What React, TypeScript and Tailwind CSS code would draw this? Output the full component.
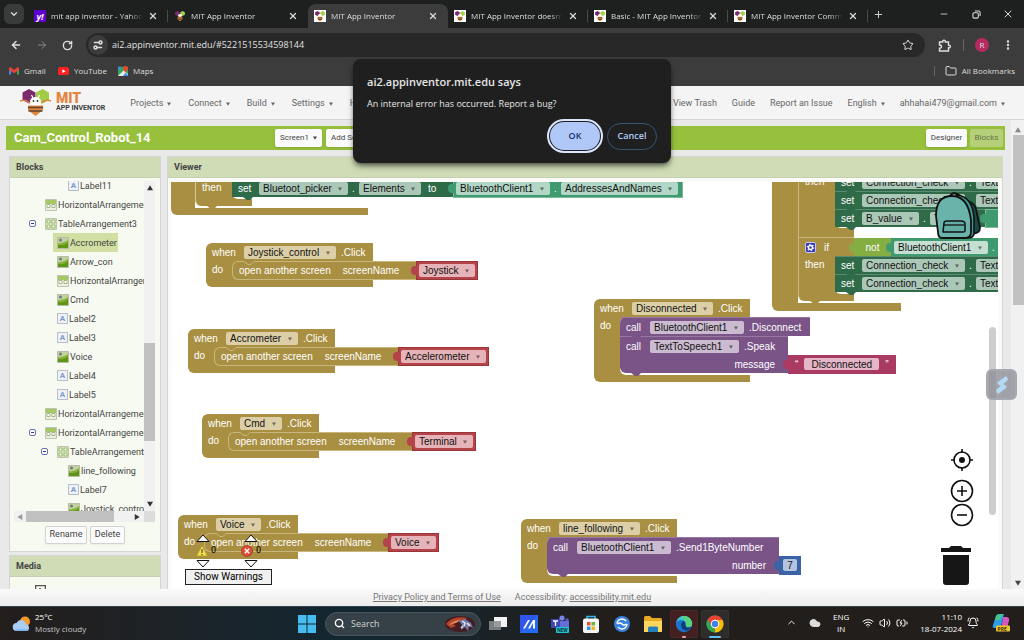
import type { ReactNode } from "react";
import clsx from "clsx";
import {
  ArrowLeft,
  ArrowRight,
  BatteryCharging,
  BellRing,
  ChevronDown,
  ChevronUp,
  Cloud,
  EllipsisVertical,
  Folder,
  Minus,
  Plus,
  RotateCw,
  Search,
  Settings2,
  Star,
  Volume2,
  Wifi,
  X,
} from "lucide-react";

/* ---------- browser chrome ---------- */

function BeeFavicon({ boxed }: { boxed?: boolean }) {
  return (
    <svg viewBox="0 0 12 12" className={clsx("size-3 shrink-0", boxed && "bg-white")}>
      <path d="M3.4 1l2.3 1.2v2.6L3.4 6 1.1 4.800V2.200z" fill="#7b2a6e" />
      <path d="M8.600 1l2.300 1.200v2.600L8.600 6 6.300 4.800V2.200z" fill="#a5cf47" />
      <ellipse cx="6" cy="5.600" rx="2" ry="1.500" fill="#fff" />
      <path d="M3.600 6.800h4.800v2.400L6 11.200 3.600 9.200z" fill="#e08a3c" />
      <path d="M3.600 8h4.800M4 9.600h4" stroke="#5a3a28" strokeWidth=".8" />
    </svg>
  );
}

function YahooIcon() {
  return (
    <span className="flex size-3 shrink-0 items-center justify-center bg-[#5f01d1] text-[9px] leading-none font-bold text-white italic">
      y!
    </span>
  );
}

const tabs = [
  { title: "mit app inventor - Yahoo", icon: "yahoo" },
  { title: "MIT App Inventor", icon: "bee" },
  { title: "MIT App Inventor", icon: "boxed", active: true },
  { title: "MIT App Inventor doesn't", icon: "boxed" },
  { title: "Basic - MIT App Inventor", icon: "boxed" },
  { title: "MIT App Inventor Comm", icon: "boxed" },
];

function TabStrip() {
  return (
    <div className="flex h-7 items-end bg-[#1e2020] pl-1 text-[#dcdcdc]">
      <button aria-label="Search tabs" className="mb-1 flex size-5 items-center justify-center rounded-md bg-[#3a3b3b]">
        <ChevronDown className="size-2.5" strokeWidth={3} />
      </button>
      <div className="ml-1 flex min-w-0" role="tablist">
        {tabs.map((tab, i) => (
          <div
            key={i}
            role="tab"
            aria-selected={!!tab.active}
            className={clsx(
              "relative flex h-6 w-[140px] items-center pr-[10px] pl-[6px]",
              tab.active && "rounded-t-lg bg-[#3c3c3c]"
            )}
          >
            {tab.icon === "yahoo" ? <YahooIcon /> : <BeeFavicon boxed={tab.icon === "boxed"} />}
            <span className="ml-[5px] w-[92px] overflow-hidden text-[8px] whitespace-nowrap mask-r-from-85%">
              {tab.title}
            </span>
            <button aria-label="Close tab" className="ml-auto">
              <X className="size-[10px]" strokeWidth={3} />
            </button>
            {!tab.active && i !== 1 && <span className="absolute right-0 h-3 w-px bg-[#4a4b4b]" />}
          </div>
        ))}
      </div>
      <button aria-label="New tab" className="flex h-7 w-5 items-center justify-center">
        <Plus className="size-[11px]" strokeWidth={2} />
      </button>
      <div className="ml-auto flex h-7">
        <button aria-label="Minimize" className="flex w-8 items-center justify-center">
          <Minus className="size-[10px]" />
        </button>
        <button aria-label="Restore" className="flex w-8 items-center justify-center">
          <svg viewBox="0 0 10 10" className="size-[9px]" fill="none" stroke="currentColor" strokeWidth="1.200">
            <rect x="1" y="3" width="6" height="6" rx="1.500" />
            <path d="M3.200 1.200H7.500Q9 1.200 9 2.700v4" />
          </svg>
        </button>
        <button aria-label="Close" className="flex w-8 items-center justify-center">
          <X className="size-3" />
        </button>
      </div>
    </div>
  );
}

function AddressRow() {
  return (
    <div className="flex h-[34px] items-center bg-[#3c3c3c] text-[#e0e0e0]">
      <div className="flex w-[86px] items-center gap-[14px] pl-[10px]">
        <button aria-label="Back">
          <ArrowLeft className="size-3" strokeWidth={3} />
        </button>
        <button aria-label="Forward" className="text-[#8a8a8a]">
          <ArrowRight className="size-3" strokeWidth={2} />
        </button>
        <button aria-label="Reload">
          <RotateCw className="size-[11px]" strokeWidth={3} />
        </button>
      </div>
      <div className="flex h-6 flex-1 items-center rounded-full bg-[#282828] pr-[11px] pl-[2px]">
        <span className="flex size-5 items-center justify-center rounded-full bg-[#3c3c3c]">
          <Settings2 className="size-3 -scale-x-100" strokeWidth={3} />
        </span>
        <input
          aria-label="Address"
          className="ml-1 min-w-0 flex-1 bg-transparent text-[9px]"
          defaultValue="ai2.appinventor.mit.edu/#5221515534598144"
        />
        <button aria-label="Bookmark this page">
          <Star className="size-3" strokeWidth={2} />
        </button>
      </div>
      <div className="flex items-center pr-[10px] pl-[13px]">
        <svg viewBox="0 0 13 13" className="size-[13px]" fill="none" stroke="currentColor" strokeWidth="1.400">
          <path d="M1.500 3h3.200q-.2-1.800 1.300-1.800T7.300 3h3.200v3.200q1.800-.2 1.800 1.300t-1.800 1.300V12h-9V9.200q2 0 2-1.600t-2-1.600z" />
        </svg>
        <span className="mr-[11px] ml-3 h-3 w-px bg-[#666]" />
        <span className="flex size-[14px] items-center justify-center rounded-full bg-[#b72a5f] text-[8px]">R</span>
        <button aria-label="Menu" className="ml-[13px]">
          <EllipsisVertical className="size-3" strokeWidth={3} />
        </button>
      </div>
    </div>
  );
}

function BookmarksBar() {
  return (
    <div className="flex h-6 items-center bg-[#3c3c3c] px-[9px] pb-[6px] text-[8px] text-[#dedede]">
      <a href="#gmail" className="flex w-[49px] items-center gap-[5px]">
        <svg viewBox="0 0 12 9" className="w-[10px]">
          <path d="M0 1v8h2.500V4z" fill="#4285f4" />
          <path d="M12 1v8H9.500V4z" fill="#34a853" />
          <path d="M0 1.200L1.500 0 6 3.600 10.500 0 12 1.200V3.600L6 7.500 0 3.600z" fill="#ea4335" />
        </svg>
        Gmail
      </a>
      <a href="#youtube" className="flex w-[60px] items-center gap-[5px]">
        <svg viewBox="0 0 12 9" className="w-[11px]">
          <rect width="12" height="9" rx="2.500" fill="#f22" />
          <path d="M4.800 2.500v4l3.400-2z" fill="#fff" />
        </svg>
        YouTube
      </a>
      <a href="#maps" className="flex items-center gap-[5px]">
        <svg viewBox="0 0 12 12" className="w-[10px]">
          <path d="M0 1h12v11H0z" fill="#34a853" />
          <path d="M0 12L7 5l5 5v2z" fill="#e8eaed" />
          <path d="M6 12l3-4 3 3v1z" fill="#4285f4" />
          <path d="M0 1h4L0 6z" fill="#4285f4" />
          <path d="M9 0a3 3 0 013 3c0 2-2 3-3 5-1-2-3-3-3-5a3 3 0 013-3z" fill="#ea4335" />
        </svg>
        Maps
      </a>
      <span className="ml-auto h-[10px] w-px bg-[#666]" />
      <button className="ml-[10px] flex items-center gap-[5px]">
        <Folder className="size-3" />
        All Bookmarks
      </button>
    </div>
  );
}

function ErrorDialog() {
  return (
    <div
      role="alertdialog"
      aria-label="ai2.appinventor.mit.edu says"
      className="absolute top-[59px] left-1/2 z-20 w-[318px] -translate-x-1/2 rounded-lg bg-[#1f1f1f] px-[14px] pt-4 pb-[11px] text-[#e6e6e6] shadow-md shadow-black/50"
    >
      <h2 className="text-[11px] leading-[14px] font-semibold">ai2.appinventor.mit.edu says</h2>
      <p className="mt-[9px] text-[9px] leading-3">An internal error has occurred. Report a bug?</p>
      <div className="mt-[10px] flex items-center justify-end gap-[5px] text-[9px] font-semibold">
        <button className="m-[2px] h-7 w-[50px] rounded-full bg-[#b0c8f8] text-[#12356b] outline-2 outline-offset-1 outline-[#dbe6fd]">
          OK
        </button>
        <button className="h-[27px] w-[50px] rounded-full border border-[#38566f] text-[#b3cdf7]">Cancel</button>
      </div>
    </div>
  );
}

/* ---------- App Inventor header ---------- */

function Caret({ className }: { className?: string }) {
  return (
    <svg viewBox="0 0 4 4" className={clsx("size-1", className)} fill="currentColor">
      <path d="M0 .5h4L2 3.800z" />
    </svg>
  );
}

function Logo() {
  return (
    <a href="#home" className="flex items-center gap-[5px]" aria-label="MIT App Inventor">
      <svg viewBox="0 0 31 27" className="h-[27px] w-[31px]">
        <path d="M9 0l6.500 3.500v7.500L9 14.500 2.500 11V3.500z" fill="#7b2a6e" />
        <path d="M22.500 0L29 3.500V11l-6.500 3.500L16 11V3.500z" fill="#a0cd45" />
        <path d="M0 12q5-2 10 2M31 12q-5-2-10 2" fill="none" stroke="#df7f3a" strokeWidth="1.500" />
        <ellipse cx="15.500" cy="12.500" rx="5.500" ry="4.500" fill="#fff" />
        <path d="M13 9l-1.500-3M18 9l1.500-3" stroke="#fff" strokeWidth="1.200" />
        <circle cx="13.500" cy="12" r=".9" fill="#333" />
        <circle cx="17.500" cy="12" r=".9" fill="#333" />
        <path d="M8 16.500h15v4.500l-7.500 6-7.500-6z" fill="#df853d" />
        <path d="M8 18.500h15M8.500 22h14" stroke="#5d4335" strokeWidth="1.600" />
      </svg>
      <span className="flex flex-col">
        <span className="text-[14px] leading-[12px] font-black text-[#e28442]">MIT</span>
        <span className="text-[7px] leading-[9px] font-bold text-[#3d3d3d]">APP INVENTOR</span>
      </span>
    </a>
  );
}

function MenuButton({ children }: { children: ReactNode }) {
  return (
    <button className="flex items-center gap-1">
      {children}
      <Caret />
    </button>
  );
}

function AppHeader() {
  return (
    <header className="flex h-[34px] shrink-0 items-center border-b border-[#d4d4d4] bg-[#f4f4f4] pr-[19px] pl-5 text-[9px] text-[#666]">
      <Logo />
      <nav className="ml-[25px] flex gap-[17px] pt-[2px]">
        <MenuButton>Projects</MenuButton>
        <MenuButton>Connect</MenuButton>
        <MenuButton>Build</MenuButton>
        <MenuButton>Settings</MenuButton>
        <MenuButton>Help</MenuButton>
      </nav>
      <nav className="ml-auto flex gap-[15px] pt-[2px]">
        <a href="#trash">View Trash</a>
        <a href="#guide">Guide</a>
        <a href="#issue">Report an Issue</a>
        <MenuButton>English</MenuButton>
        <MenuButton>ahhahai479@gmail.com</MenuButton>
      </nav>
    </header>
  );
}

function ProjectBar() {
  const button = "flex h-[18px] items-center justify-center rounded-xs bg-[#fafafa] px-[5px] shadow-sm";
  return (
    <div className="mx-[6px] flex h-6 shrink-0 items-center bg-[#97c03c] pr-[2px] pl-[3px] text-[8px] text-[#444]">
      <h1 className="w-[266px] pl-[5px] text-[13px] font-bold text-white">Cam_Control_Robot_14</h1>
      <button className={clsx(button, "w-[47px] gap-1")}>
        Screen1 <Caret />
      </button>
      <button className={clsx(button, "ml-1")}>Add Screen ...</button>
      <button className={clsx(button, "ml-auto w-[41px]")}>Designer</button>
      <button className="ml-[3px] flex h-[18px] w-[33px] items-center justify-center rounded-xs bg-[#b5d078] text-[#66774a]">
        Blocks
      </button>
    </div>
  );
}

/* ---------- component tree ---------- */

type NodeKind = "label" | "button" | "horizontal" | "table";

function NodeIcon({ kind }: { kind: NodeKind }) {
  if (kind === "label") {
    return (
      <span className="flex size-[11px] shrink-0 items-center justify-center border border-[#b9bfca] bg-[#eef1f8] text-[8px] leading-none font-bold text-[#7d97c8]">
        A
      </span>
    );
  }
  if (kind === "button") {
    return (
      <svg viewBox="0 0 12 12" className="size-3 shrink-0">
        <path d="M.5.5h11v11H.5z" fill="#c3d19c" stroke="#b5bda5" />
        <path d="M1 6q5 1 10-3v8H1z" fill="#85b33a" />
        <path d="M1 8q6 1 10-3v6H1z" fill="#5f9416" />
        <circle cx="3.500" cy="3" r="1.500" fill="#6c7887" />
      </svg>
    );
  }
  return (
    <svg viewBox="0 0 12 12" className="size-3 shrink-0">
      <path d="M.5.5h11v11H.5z" fill="#eaf0dd" stroke="#bcc5ad" />
      {kind === "horizontal" ? (
        <>
          <path d="M1 1h10v4H1z" fill="#a5c766" />
          <path d="M2 5.500h3v3H2zM7 5.500h3v3H7z" fill="#fff" stroke="#a5b688" />
        </>
      ) : (
        <path
          d="M2 2h3v3H2zM7 2h3v3H7zM2 7h3v3H2zM7 7h3v3H7z"
          fill="#fff"
          stroke="#98b968"
          strokeWidth="1.200"
        />
      )}
    </svg>
  );
}

const indents = ["pl-0", "pl-[23px]", "pl-[35px]", "pl-[46px]"];

const treeNodes: { name: string; kind: NodeKind; level: number; open?: boolean; selected?: boolean }[] = [
  { name: "Label11", kind: "label", level: 3 },
  { name: "HorizontalArrangement6", kind: "horizontal", level: 1 },
  { name: "TableArrangement3", kind: "table", level: 1, open: true },
  { name: "Accrometer", kind: "button", level: 2, selected: true },
  { name: "Arrow_con", kind: "button", level: 2 },
  { name: "HorizontalArrangement7", kind: "horizontal", level: 2 },
  { name: "Cmd", kind: "button", level: 2 },
  { name: "Label2", kind: "label", level: 2 },
  { name: "Label3", kind: "label", level: 2 },
  { name: "Voice", kind: "button", level: 2 },
  { name: "Label4", kind: "label", level: 2 },
  { name: "Label5", kind: "label", level: 2 },
  { name: "HorizontalArrangement8", kind: "horizontal", level: 1 },
  { name: "HorizontalArrangement9", kind: "horizontal", level: 1, open: true },
  { name: "TableArrangement4", kind: "table", level: 2, open: true },
  { name: "line_following", kind: "button", level: 3 },
  { name: "Label7", kind: "label", level: 3 },
  { name: "Joystick_control", kind: "button", level: 3 },
];

function ComponentTree() {
  return (
    <ul className="-mt-[5px] text-[9px] text-[#444]">
      {treeNodes.map((node) => (
        <li key={node.name} className={clsx("flex h-[19px] items-center", indents[node.level])}>
          <span className="w-1 shrink-0">
            {node.open && (
              <button
                aria-label={`Collapse ${node.name}`}
                className="-ml-2 flex size-[7px] items-center justify-center rounded-xs border border-[#6a70b5] bg-white text-[#33388c]"
              >
                <span className="h-px w-[3px] bg-[#33388c]" />
              </button>
            )}
          </span>
          <span
            className={clsx(
              "flex h-[19px] items-center gap-px pr-px pl-1 whitespace-nowrap",
              node.selected && "bg-[#d1e0a2]"
            )}
          >
            <NodeIcon kind={node.kind} />
            <span className="pt-[3px]">{node.name}</span>
          </span>
        </li>
      ))}
    </ul>
  );
}

function PanelTitle({ children }: { children: ReactNode }) {
  return (
    <h2 className="flex h-[21px] shrink-0 items-center border-b border-[#c5cfb2] bg-[#cfdcb6] px-[6px] pt-px text-[9px] font-bold text-[#444]">
      {children}
    </h2>
  );
}

function Sidebar() {
  const button =
    "flex h-[18px] items-center justify-center rounded-xs border border-[#d2d2d2] bg-[#fbfbfb] shadow-xs";
  return (
    <aside className="flex w-[152px] shrink-0 flex-col gap-[3px]">
      <section className="flex min-h-0 flex-1 flex-col border border-[#d5d5d5] bg-[#f7faf1]">
        <PanelTitle>Blocks</PanelTitle>
        <div className="mt-[3px] mr-[5px] ml-1 flex min-h-0 flex-1">
          <div className="min-w-0 flex-1 overflow-hidden">
            <ComponentTree />
          </div>
          <div className="flex w-[11px] flex-col items-center bg-[#f1f1f1] py-1 text-[#333]">
            <Caret className="size-[6px] rotate-180" />
            <div className="flex min-h-0 w-full flex-1 flex-col">
              <div className="flex-[152]" />
              <div className="flex-[97] bg-[#c1c1c1]" />
              <div className="flex-[60]" />
            </div>
            <Caret className="size-[6px]" />
          </div>
        </div>
        <div className="mr-[5px] ml-1 flex h-[11px] shrink-0 items-center bg-[#f1f1f1] pl-[3px]">
          <Caret className="size-[6px] rotate-90 text-[#999]" />
          <div className="ml-[3px] h-full w-[88px] bg-[#c1c1c1]" />
          <Caret className="ml-5 size-[6px] -rotate-90 text-[#333]" />
          <div className="ml-auto h-full w-[11px] bg-[#dcdcdc]" />
        </div>
        <div className="mt-1 mb-[7px] ml-[35px] flex gap-[3px] text-[9px] text-[#444]">
          <button className={clsx(button, "w-[42px]")}>Rename</button>
          <button className={clsx(button, "w-[35px]")}>Delete</button>
        </div>
      </section>
      <section className="h-[34px] shrink-0 overflow-hidden border border-b-0 border-[#d5d5d5] bg-[#f7faf1]">
        <PanelTitle>Media</PanelTitle>
        <svg viewBox="0 0 11 11" className="mt-2 ml-[25px] size-[11px]" fill="none" stroke="#555">
          <path d="M.5.500h10v10H.5z" strokeWidth="1.500" />
          <path d="M2 8l3-5 2 4 2-3" />
        </svg>
      </section>
    </aside>
  );
}

/* ---------- block workspace ---------- */

function Field({ name, color }: { name: string; color: string }) {
  return (
    <span className="relative flex shrink-0">
      <select
        aria-label={name}
        className={clsx("h-[13px] appearance-none rounded-xs pr-4 pl-1 text-[10px] leading-[13px] text-[#111]", color)}
      >
        <option>{name}</option>
      </select>
      <Caret className="pointer-events-none absolute top-[5px] right-[6px] text-black/50" />
    </span>
  );
}

function Notch({ className }: { className: string }) {
  return (
    <svg viewBox="0 0 14 4" className={clsx("absolute -bottom-[3px] left-[9px] z-10 h-1 w-[14px]", className)}>
      <path d="M0 0h14l-1 1h-1L9 4H6L2 1H1z" fill="currentColor" />
    </svg>
  );
}

function ValueBlock({ color, plug, children }: { color: string; plug: string; children?: ReactNode }) {
  return (
    <div className={clsx("relative flex h-[19px] shrink-0 items-center border", color)}>
      <span className={clsx("absolute top-1 -left-[6px] h-[9px] w-[6px] rounded-l-sm", plug)} />
      {children}
    </div>
  );
}

// Event handler: gold bracket whose body may stick out to the right
function EventBlock({
  component,
  className,
  children,
}: {
  component: string;
  className: string;
  children: ReactNode;
}) {
  return (
    <div className={clsx("absolute flex w-max flex-col rounded-l-md bg-[#a98f42]", className)}>
      <div className="flex h-[18px] items-center pr-2 pl-[6px]">
        <span className="w-8">when</span>
        <Field name={component} color="bg-[#dccfa8]" />
        <span className="ml-[5px]">.Click</span>
      </div>
      <div className="flex w-0">
        <span className="w-[26px] shrink-0 pt-[3px] pl-[6px] leading-3">do</span>
        <div className="shrink-0">{children}</div>
      </div>
      <div className="h-[7px]" />
    </div>
  );
}

function OpenScreen({ screen }: { screen: string }) {
  return (
    <div className="flex">
      <div className="relative flex h-[19px] w-[184px] items-center gap-3 rounded-l-md border-y border-l border-[#c9b67c] bg-[#a98f42] pl-[6px] whitespace-nowrap">
        <svg viewBox="0 0 14 4" className="absolute -top-px left-[9px] h-1 w-[14px] fill-[#a98f42] stroke-[#c9b67c]">
          <path d="M0 0l2 .5L6 3.500h3L12 .5l2-.5" />
        </svg>
        <span>open another screen</span>
        <span>screenName</span>
      </div>
      <ValueBlock color="border-[#9c3539] bg-[#b5444a] px-[2px]" plug="bg-[#b5444a]">
        <Field name={screen} color="bg-[#e6b4b8]" />
      </ValueBlock>
    </div>
  );
}

function Call({
  target,
  method,
  arg,
  width,
  value,
}: {
  target: string;
  method: string;
  arg?: string;
  width: string;
  value?: ReactNode;
}) {
  return (
    <div className={clsx("relative bg-[#7a5387]", width, arg && "rounded-bl-md")}>
      <div className="flex h-[19px] items-center border-t border-[#9877a2] pl-[6px]">
        <span className="w-6">call</span>
        <Field name={target} color="bg-[#cbbbd0]" />
        <span className="ml-[5px]">{method}</span>
      </div>
      {arg && (
        <div className="flex h-[18px] items-center justify-end">
          <span className="mr-[13px]">{arg}</span>
          <div className="w-0">
            <div className="w-max">{value}</div>
          </div>
        </div>
      )}
      <Notch className="text-[#7a5387]" />
    </div>
  );
}

function SetRow({ component, property, children }: { component: string; property: string; children?: ReactNode }) {
  return (
    <div className="relative flex h-[18px] w-max min-w-[220px] items-center border-t border-[#5b8b72] bg-[#2f6a49] pl-[6px]">
      <span className="w-[21px]">set</span>
      <Field name={component} color="bg-[#abc7b7]" />
      <span className="w-[11px] text-center">.</span>
      <Field name={property} color="bg-[#abc7b7]" />
      {children}
      <Notch className="text-[#2f6a49]" />
    </div>
  );
}

function PickerHandler() {
  return (
    <div className="absolute -top-[3px] left-0 w-[197px] rounded-bl-md bg-[#a98f42] pb-[7px]">
      <div className="ml-6 bg-white pb-[2px]">
        <div className="relative w-[57px] rounded-bl-md border-l border-[#d6c798] bg-[#a98f42] pb-[7px]">
          <div className="flex w-0">
            <span className="w-9 shrink-0 pl-[6px] leading-[18px]">then</span>
            <div className="shrink-0 rounded-bl-md bg-white pb-[2px]">
              <SetRow component="Bluetoot_picker" property="Elements">
                <span className="ml-[7px] w-[25px]">to</span>
                <ValueBlock color="border-[#7dbb9b] bg-[#409a70] pr-1 pl-[2px]" plug="bg-[#409a70]">
                  <Field name="BluetoothClient1" color="bg-[#b3d7c6]" />
                  <span className="w-[11px] text-center">.</span>
                  <Field name="AddressesAndNames" color="bg-[#b3d7c6]" />
                </ValueBlock>
              </SetRow>
            </div>
          </div>
          <Notch className="text-[#a98f42]" />
        </div>
      </div>
    </div>
  );
}

function ConnectionHandler() {
  return (
    <div className="absolute -top-[9px] left-[601px] w-[129px] rounded-bl-md bg-[#a98f42] pb-2">
      <div className="ml-[26px] bg-white pb-[2px]">
        <div className="relative w-14 border-l border-[#c9b67c] bg-[#a98f42] pb-[9px]">
          <div className="flex w-0">
            <span className="w-9 shrink-0 pl-[6px] leading-[18px]">then</span>
            <div className="shrink-0 rounded-bl-md bg-white pb-px">
              <SetRow component="Connection_check" property="Text" />
              <SetRow component="Connection_check" property="Text" />
              <SetRow component="B_value" property="Text">
                <span className="w-4" />
                <ValueBlock color="border-[#7dbb9b] bg-[#409a70] w-20" plug="bg-[#409a70]" />
              </SetRow>
            </div>
          </div>
        </div>
        <div className="relative w-14 rounded-bl-md border-t border-l border-[#c9b67c] bg-[#a98f42] pb-[7px]">
          <div className="flex h-[18px] w-0 items-center">
            <button
              aria-label="Add else"
              className="ml-[6px] flex size-[11px] shrink-0 items-center justify-center rounded-xs border border-[#c9c9ee] bg-[#3538b5]"
            >
              <svg viewBox="0 0 9 9" className="size-[9px]" fill="none" stroke="#fff">
                <circle cx="4.500" cy="4.500" r="2" strokeWidth="1.400" />
                <circle cx="4.500" cy="4.500" r="3.200" strokeWidth="1.200" strokeDasharray="1.300 2.050" />
              </svg>
            </button>
            <span className="w-[38px] shrink-0 pl-2">if</span>
            <ValueBlock color="border-[#84ad42] bg-[#84ad42] w-[37px] justify-center" plug="bg-[#84ad42]">
              not
            </ValueBlock>
            <ValueBlock color="border-[#409a70] bg-[#409a70] w-[180px] pl-[2px]" plug="bg-[#409a70]">
              <Field name="BluetoothClient1" color="bg-[#c5e0d3]" />
              <span className="w-[11px] text-center">.</span>
            </ValueBlock>
          </div>
          <div className="flex w-0">
            <span className="w-9 shrink-0 pl-[6px] leading-[18px]">then</span>
            <div className="shrink-0 rounded-bl-md bg-white pb-[2px]">
              <SetRow component="Connection_check" property="Text" />
              <SetRow component="Connection_check" property="Text" />
            </div>
          </div>
          <Notch className="text-[#a98f42]" />
        </div>
      </div>
    </div>
  );
}

function Backpack() {
  return (
    <svg viewBox="0 0 48 48" className="absolute top-[10px] right-4 z-10 size-12" stroke="#111" strokeLinejoin="round">
      <path d="M34 9q8 2 9 13l3 14q0 5-8 6z" fill="#1d4a46" strokeWidth="1.800" />
      <path d="M16 4q3-5 9-1l2 2" fill="none" strokeWidth="2" />
      <path d="M22 3q17 1 18 24v15q-1 4-6 4H20z" fill="#3f9a92" strokeWidth="1.600" />
      <path d="M2 24Q2 4 18 4q16 0 19 24v12q0 6-6 6H8q-4 0-4-6z" fill="#69b3ab" strokeWidth="1.800" />
      <path d="M9 40l1-9q0-2 3-2h14q4 0 4 3v7q0 1-2 1z" fill="#62ada4" strokeWidth="1.500" />
      <path d="M10 33h20" fill="none" strokeWidth="1.300" />
    </svg>
  );
}

function WorkspaceControls() {
  return (
    <div className="absolute right-6 bottom-1 flex flex-col items-end">
      <button aria-label="Center blocks" className="mr-px">
        <svg viewBox="0 0 22 22" className="size-[22px]" fill="none" stroke="#111" strokeWidth="1.600">
          <circle cx="11" cy="11" r="8" />
          <circle cx="11" cy="11" r="3" fill="#111" stroke="none" />
          <path d="M11 0v4M11 18v4M0 11h4M18 11h4" />
        </svg>
      </button>
      <button aria-label="Zoom in" className="mt-2">
        <svg viewBox="0 0 24 24" className="size-6" fill="none" stroke="#111" strokeWidth="1.600">
          <circle cx="12" cy="12" r="10.500" />
          <path d="M12 7v10M7 12h10" />
        </svg>
      </button>
      <button aria-label="Zoom out">
        <svg viewBox="0 0 24 24" className="size-6" fill="none" stroke="#111" strokeWidth="1.600">
          <circle cx="12" cy="12" r="10.500" />
          <path d="M7 12h10" />
        </svg>
      </button>
      <svg viewBox="0 0 30 40" className="mt-[18px] mr-[3px] h-10 w-[30px]" fill="#161616">
        <path d="M0 3h8l2-2h10l2 2h8v4H0zM2 10h26v27q0 3-3 3H5q-3 0-3-3z" />
      </svg>
    </div>
  );
}

function Counter({ children }: { children: ReactNode }) {
  return (
    <div className="flex w-12 flex-col text-black">
      <svg viewBox="0 0 14 8" className="ml-[11px] h-2 w-[14px]" fill="#fff" stroke="#111">
        <path d="M1 7.500h12L7 1z" />
      </svg>
      <div className="flex h-[18px] items-center gap-[3px] pl-[11px] text-[9px]">{children}0</div>
      <svg viewBox="0 0 14 8" className="ml-[11px] h-2 w-[14px]" fill="#fff" stroke="#111">
        <path d="M1 .5h12L7 7z" />
      </svg>
    </div>
  );
}

function Warnings() {
  return (
    <div className="absolute bottom-1 left-[14px] font-[Roboto,sans-serif]">
      <div className="flex">
        <Counter>
          <svg viewBox="0 0 12 12" className="size-3">
            <path d="M6 .5l5.500 10.500H.5z" fill="#f3e04e" stroke="#b59b22" strokeWidth=".8" />
            <path d="M6 4v4M6 9v1.200" stroke="#333" />
          </svg>
        </Counter>
        <Counter>
          <svg viewBox="0 0 12 12" className="-ml-[3px] size-3">
            <circle cx="6" cy="6" r="5.500" fill="#dd4f35" stroke="#a53523" strokeWidth=".8" />
            <path d="M3.800 3.800l4.400 4.400M8.200 3.800L3.800 8.200" stroke="#fff" strokeWidth="1.400" />
          </svg>
        </Counter>
      </div>
      <button className="mt-px block h-4 w-[87px] border border-[#222] bg-[#f0f0f0] text-[10px] leading-3 text-black">
        Show Warnings
      </button>
    </div>
  );
}

function Workspace() {
  return (
    <div className="relative mt-1 mr-[4px] ml-[3px] min-h-0 flex-1 overflow-hidden bg-white font-['Liberation_Sans',sans-serif] text-[10px] text-white">
      <PickerHandler />
      <ConnectionHandler />
      <EventBlock component="Joystick_control" className="top-[61px] left-[35px]">
        <OpenScreen screen="Joystick" />
      </EventBlock>
      <EventBlock component="Accrometer" className="top-[147px] left-[17px]">
        <OpenScreen screen="Accelerometer" />
      </EventBlock>
      <EventBlock component="Cmd" className="top-[232px] left-[31px]">
        <OpenScreen screen="Terminal" />
      </EventBlock>
      <EventBlock component="Voice" className="top-[333px] left-[7px]">
        <OpenScreen screen="Voice" />
      </EventBlock>
      <EventBlock component="Disconnected" className="top-[117px] left-[423px]">
        <div className="rounded-l-md bg-white pb-[2px]">
          <Call target="BluetoothClient1" method=".Disconnect" width="w-[190px] rounded-tl-md" />
          <Call
            target="TextToSpeech1"
            method=".Speak"
            arg="message"
            width="w-[168px]"
            value={
              <ValueBlock color="border-[#a93a62] bg-[#a93a62] gap-[6px] px-[6px]" plug="bg-[#a93a62]">
                <span>“</span>
                <input
                  aria-label="Text"
                  defaultValue="Disconnected"
                  className="h-3 w-[75px] rounded-xs bg-[#e4b6c8] text-center text-[#111]"
                />
                <span>”</span>
              </ValueBlock>
            }
          />
        </div>
      </EventBlock>
      <EventBlock component="line_following" className="top-[337px] left-[350px]">
        <div className="rounded-l-md bg-white pb-[2px]">
          <Call
            target="BluetoothClient1"
            method=".Send1ByteNumber"
            arg="number"
            width="w-[232px] rounded-tl-md"
            value={
              <ValueBlock color="border-[#3a63a5] bg-[#3a63a5] px-[3px]" plug="bg-[#3a63a5]">
                <input
                  aria-label="Number"
                  defaultValue="7"
                  className="h-3 w-[14px] rounded-xs bg-[#b4c4e0] text-center text-[#111]"
                />
              </ValueBlock>
            }
          />
        </div>
      </EventBlock>
      <Backpack />
      <div className="absolute top-[145px] right-[2px] h-[188px] w-[7px] rounded-full bg-[#cdcdcd]" />
      <WorkspaceControls />
      <Warnings />
    </div>
  );
}

function PageScrollbar() {
  return (
    <div className="flex w-[13px] shrink-0 flex-col items-center bg-[#f1f1f1] pt-[5px] pb-[3px] text-[#888]">
      <Caret className="my-[2px] size-[6px] rotate-180" />
      <div className="flex w-full flex-1 flex-col pl-[2px]">
        <div className="flex-[170] bg-[#c1c1c1]" />
        <div className="flex-[275]" />
      </div>
      <Caret className="size-[6px] text-[#444]" />
    </div>
  );
}

/* ---------- Windows taskbar ---------- */

function TaskIcon({ children, label, className }: { children: ReactNode; label: string; className?: string }) {
  return (
    <button
      aria-label={label}
      className={clsx("relative flex h-7 shrink-0 items-center justify-center rounded-xs", className ?? "w-7")}
    >
      <svg viewBox="0 0 18 18" className="size-[18px]">
        {children}
      </svg>
    </button>
  );
}

function TaskbarApps() {
  return (
    <div className="flex items-center gap-[3px] pl-[3px]">
      <TaskIcon label="Start" className="mr-[6px] w-[18px]">
        <path d="M0 0h8.500v8.500H0zM9.500 0H18v8.500H9.500zM0 9.500h8.500V18H0zM9.500 9.500H18V18H9.500z" fill="#46bdf0" />
      </TaskIcon>
      <label className="flex h-6 w-[156px] items-center rounded-full border border-[#4b565b] bg-[#354147] pr-1 pl-2">
        <Search className="size-[11px] shrink-0" strokeWidth={3} />
        <input
          aria-label="Search"
          placeholder="Search"
          className="ml-[6px] min-w-0 flex-1 bg-transparent text-[9px] placeholder:text-[#d0d4d6]"
        />
        <svg viewBox="0 0 32 18" className="h-[18px] w-8 shrink-0">
          <ellipse cx="16" cy="9" rx="15" ry="8" fill="#451d22" />
          <path d="M2 9Q9 0 23 3l-4 3q-8-1-10 3l3 2-5 2z" fill="#b5452c" />
          <path d="M5 10q5-5 12-5l-5 3z" fill="#e28b57" />
          <path d="M15 6l6-2 6 4 2 5-4-2-1 5-3-4-4 3 1-5z" fill="#6f79a8" />
          <path d="M18 6l3 2-1 3M23 8l3 3M17 13l2-2" stroke="#e5e6f2" strokeWidth="1.500" fill="none" />
        </svg>
      </label>
      <TaskIcon label="Task view">
        <path d="M5 2h13v10H5z" fill="#f4f4f4" />
        <path d="M0 6h12v9H0z" fill="#8a8d8e" opacity=".85" />
      </TaskIcon>
      <TaskIcon label="MyASUS">
        <path d="M0 0h18v18H0z" fill="#2f55ec" />
        <path d="M0 18L18 0v18z" fill="#2378f5" opacity=".6" />
        <path d="M3 13.500L8 5h2L5 13.500zM8 13.500L13 5h2v8.500h-2V8l-3 5.500z" fill="#fff" />
      </TaskIcon>
      <TaskIcon label="Teams">
        <circle cx="11" cy="3" r="2.600" fill="#7b83eb" />
        <circle cx="16" cy="5" r="1.800" fill="#5059c9" />
        <path d="M7 6h11v7q-2 4-6 4-5 0-5-5z" fill="#656dd6" />
        <path d="M0 4h9v9H0z" fill="#3d46b8" />
        <path d="M2 6h5M4.500 6v5" stroke="#fff" strokeWidth="1.300" />
        <rect x="5" y="12" width="13" height="6" rx="1" fill="#22c4cf" />
        <text x="6.200" y="16.800" fontSize="4.500" fontWeight="700" fill="#072e35">
          NEW
        </text>
      </TaskIcon>
      <TaskIcon label="Store">
        <path d="M5 4V1.500h8V4" fill="none" stroke="#35b9e9" strokeWidth="1.600" />
        <rect x="1" y="3.500" width="16" height="14.500" rx="2" fill="#f5f5f5" />
        <path d="M5 7h3.500v3.500H5z" fill="#e8502b" />
        <path d="M9.500 7H13v3.500H9.500z" fill="#6eb53c" />
        <path d="M5 11.500h3.500V15H5z" fill="#2c95e0" />
        <path d="M9.500 11.500H13V15H9.500z" fill="#f3b51f" />
      </TaskIcon>
      <TaskIcon label="Sync">
        <circle cx="9" cy="9" r="8" fill="#3a82dd" />
        <circle cx="9" cy="9" r="5" fill="none" stroke="#fff" strokeWidth="1.400" strokeDasharray="12 3.700" />
        <path d="M4.500 9q2.500-2 4.500 0t4.500 0" fill="none" stroke="#fff" strokeWidth="1.400" />
      </TaskIcon>
      <TaskIcon label="File Explorer">
        <path d="M0 2.500q0-1.500 1.500-1.500H6l2 2h8.500Q18 3 18 4.500V17H0z" fill="#e5a924" />
        <path d="M0 6h18v10q0 1-1 1H1q-1 0-1-1z" fill="#fbd55c" />
        <path d="M4 17v-4q0-1.500 1.500-1.500h7Q14 11.500 14 13v4z" fill="#2480bd" />
      </TaskIcon>
      <div className="relative flex">
        <TaskIcon label="Edge" className="w-7 border border-[#4d2726] bg-[#431f20]">
          <circle cx="9" cy="9" r="8.200" fill="#1b74d0" />
          <path d="M1 8a8.200 8.200 0 0116-1q1 5-4 5.500-3 0-2.500-2Q11 5 6 5 2.500 5 1 8z" fill="#3fc3c4" />
          <path d="M6 1.500Q14-1 17 7q1 5-4 5.500-3 0-2.500-2Q12 5 6 1.500z" fill="#5bd37c" />
          <path d="M6 10q0-3 3-4 2 1.500 1.500 4Q11 12.500 13 12.500q2 0 3-1-1 4-5 4-4.500-.5-5-5.500z" fill="#0d3f7d" />
        </TaskIcon>
        <span className="absolute bottom-0 left-3 h-[2px] w-1 rounded-full bg-[#f0a0a0]" />
      </div>
      <div className="relative flex">
        <TaskIcon label="Chrome" className="w-7 border border-[#353331] bg-[#2f2c2b]">
          <circle cx="9" cy="9" r="8.500" fill="#33a852" />
          <path d="M1.600 4.800A8.500 8.500 0 0116.400 4.800L9 9z" fill="#ea4335" />
          <path d="M16.500 5A8.500 8.500 0 019 17.500L9 9V5z" fill="#fbbc04" />
          <path d="M1.600 4.800L5.500 11 9 9V4.800z" fill="#ea4335" />
          <path d="M1.600 4.800L5.500 11.200 9 17.500A8.500 8.500 0 011.600 4.800z" fill="#33a852" />
          <circle cx="9" cy="9" r="4.200" fill="#fff" />
          <circle cx="9" cy="9" r="3.200" fill="#3f7fee" />
        </TaskIcon>
        <span className="absolute bottom-0 left-2 h-[2px] w-3 rounded-full bg-[#5fc2ee]" />
      </div>
    </div>
  );
}

function Taskbar() {
  return (
    <footer className="grid h-[34px] shrink-0 grid-cols-[1fr_auto_1fr] items-center border-t border-[#35434a] bg-linear-to-r from-[#241e1d] via-[#102732] via-35% to-[#221e1b] to-60% text-[8px] leading-[12px] text-white">
      <div className="flex items-center gap-1 pl-3">
        <svg viewBox="0 0 19 16" className="h-4 w-[19px]">
          <circle cx="13" cy="5.500" r="5" fill="#f59b2d" />
          <path d="M5 15a4 4 0 01-.5-8A5 5 0 0114 8.500a3.300 3.300 0 01.5 6.500z" fill="#a9cdf5" />
          <path d="M3 13.500h14q-1 1.500-3 1.500H5q-1.500 0-2-1.500z" fill="#79aeea" />
        </svg>
        <div className="pb-[2px]">
          <p>25°C</p>
          <p className="text-[#c5c5c5]">Mostly cloudy</p>
        </div>
      </div>
      <TaskbarApps />
      <div className="flex items-center justify-end pr-[14px] pb-[2px]">
        <ChevronUp className="mr-3 size-[11px]" />
        <Cloud className="mr-3 size-3 fill-[#ddd] text-[#ddd]" />
        <div className="mr-[13px] text-center">
          <p>ENG</p>
          <p>IN</p>
        </div>
        <Wifi className="mr-[5px] size-3" />
        <Volume2 className="mr-[5px] size-3" />
        <BatteryCharging className="mr-3 size-3" />
        <div className="mr-[5px] text-right">
          <p>11:10</p>
          <p>18-07-2024</p>
        </div>
        <BellRing className="mr-[13px] size-3" />
        <svg viewBox="0 0 18 18" className="size-[18px]">
          <path d="M4 2q1-2 4-2h4L9 12q-1 2-4 2H2q-2 0-1-3z" fill="#2b9de8" />
          <path d="M4 2q1-2 4-2h3L8 6H3z" fill="#42c586" />
          <path d="M11 3h3q4 0 3 4l-2 7q-1 2-4 2H7q2 0 2.500-3z" fill="#d458c3" />
          <rect x="4" y="11.500" width="14" height="6" rx="1" fill="#f1c52c" />
          <text x="5.500" y="16.500" fontSize="5" fontWeight="700" fill="#3d2c00">
            PRE
          </text>
        </svg>
      </div>
    </footer>
  );
}

export default function App() {
  return (
    <div className="relative flex h-screen flex-col overflow-hidden font-['Open_Sans',sans-serif]">
      <TabStrip />
      <AddressRow />
      <BookmarksBar />
      <ErrorDialog />

      <div className="flex min-h-0 flex-1 flex-col bg-[#e9e9e9] font-[Roboto,sans-serif]">
        <AppHeader />
        <div className="flex min-h-0 flex-1">
          <main className="flex min-w-0 flex-1 flex-col pt-[6px]">
            <ProjectBar />
            <div className="mt-[6px] flex min-h-0 flex-1 gap-[6px] pr-2 pl-[9px]">
              <Sidebar />
              <section className="flex min-w-0 flex-1 flex-col border border-b-0 border-[#d5d5d5] bg-[#fafbf6]">
                <PanelTitle>Viewer</PanelTitle>
                <Workspace />
              </section>
            </div>
          </main>
          <PageScrollbar />
        </div>
        <div className="flex h-[17px] shrink-0 items-center justify-center gap-[14px] bg-linear-to-b from-[#fafafa] to-[#ececec] text-[9px] text-[#777]">
          <a href="#privacy" className="underline">
            Privacy Policy and Terms of Use
          </a>
          <span>
            Accessibility:{" "}
            <a href="#accessibility" className="underline">
              accessibility.mit.edu
            </a>
          </span>
        </div>
      </div>
      <Taskbar />

      <button
        aria-label="Open assistant"
        className="absolute top-[369px] right-[7px] flex size-[31px] items-center justify-center rounded-md border-2 border-[#a9aab4]/80 bg-[#8d8f99]/80"
      >
        <svg viewBox="0 0 16 18" className="h-[18px] w-4" fill="#b5d8f5">
          <path d="M12 0L5 5Q2 7 5 9l2 1 6-5q2-2-1-5zM4 18l7-5q3-2 0-4L9 8l-6 5q-2 2 1 5z" />
        </svg>
      </button>
    </div>
  );
}
